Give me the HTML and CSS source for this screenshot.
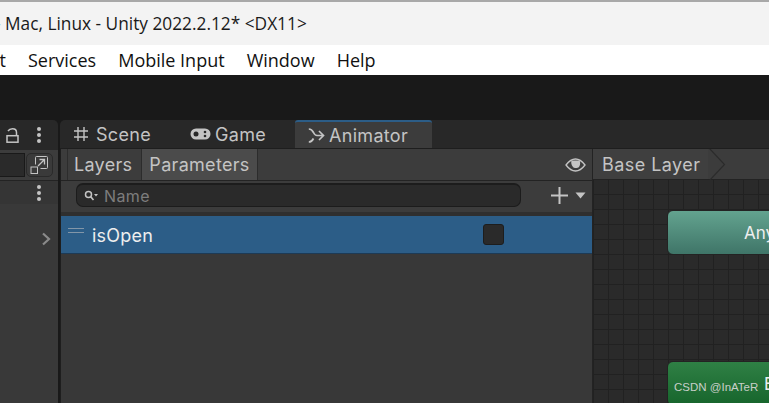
FILE: index.html
```html
<!DOCTYPE html>
<html lang="en">
<head>
<meta charset="utf-8">
<title>Unity Animator</title>
<link rel="stylesheet" href="styles.css">
</head>
<body>
<div class="titlebar"><span class="title">- Mac, Linux - Unity 2022.2.12* &lt;DX11&gt;</span></div>
<nav class="menubar">
  <span class="menu-clip">t</span><span>Services</span><span>Mobile Input</span><span>Window</span><span>Help</span>
</nav>
<div class="toolbar-band"></div>
<main class="workspace">
  <section class="left-panel">
    <div class="left-tabs">
      <svg class="ico-lock" width="13" height="15" viewBox="0 0 13 15"><path d="M2 3C3 1.500 4.500 .8 6.500 .8 9 .8 10.500 2.300 10.500 4.500V8" fill="none" stroke="#c4c4c4" stroke-width="1.500"/><rect x="1" y="7.700" width="11" height="6.500" fill="none" stroke="#c4c4c4" stroke-width="1.500"/></svg>
      <span class="dots"><i></i><i></i><i></i></span>
    </div>
    <div class="left-tools">
      <div class="left-field"></div>
      <div class="left-btn">
        <svg width="20" height="20" viewBox="0 0 20 20"><path d="M5.500 9.500V2.500a1 1 0 0 1 1-1h10a1 1 0 0 1 1 1v10a1 1 0 0 1-1 1h-6" fill="none" stroke="#c4c4c4" stroke-width="1"/><rect x="1" y="12" width="6.500" height="6.500" fill="none" stroke="#c4c4c4"/><path d="M8 11l6-6M9.500 4.500h5v5" fill="none" stroke="#c4c4c4" stroke-width="1.300"/></svg>
      </div>
    </div>
    <div class="left-head"><span class="dots"><i></i><i></i><i></i></span></div>
    <div class="left-body">
      <svg class="chev" width="10" height="14" viewBox="0 0 10 14"><path d="M2 1.500 8 7l-6 5.500" fill="none" stroke="#8a8a8a" stroke-width="2.200"/></svg>
    </div>
  </section>
  <section class="right-panel">
    <div class="tabs">
      <div class="tab tab-scene">
        <svg width="16" height="16" viewBox="0 0 16 16"><path d="M5 1v14M11 1v14M1 5h14M1 11h14" stroke="#c4c4c4" stroke-width="1.400" fill="none"/></svg>
        <span>Scene</span>
      </div>
      <div class="tab tab-game">
        <svg width="21" height="12" viewBox="0 0 21 12"><rect x="0.500" y="0.500" width="20" height="11" rx="5.500" fill="#c4c4c4"/><circle cx="6" cy="6" r="2.500" fill="#282828"/><circle cx="15" cy="4" r="1.300" fill="#282828"/><circle cx="15" cy="8" r="1.300" fill="#282828"/></svg>
        <span>Game</span>
      </div>
      <div class="tab tab-animator">
        <svg width="17" height="15" viewBox="0 0 17 15"><path d="M.8 1c2.500 0 3.700 1.500 4.700 3.500 .7 1.500 1.500 3 3.500 3h6M.8 14c2.500 0 3.700-1.500 4.700-3.500M11 3l4.500 4.500L11 12" fill="none" stroke="#c4c4c4" stroke-width="1.700"/></svg>
        <span>Animator</span>
      </div>
    </div>
    <div class="content">
      <div class="sidebar">
        <div class="side-tabs">
          <span class="side-tab">Layers</span>
          <span class="side-tab is-on">Parameters</span>
          <svg class="eye" width="21" height="14" viewBox="0 0 21 14"><path d="M1 7c3-4 6-6 9.500-6S17 3 20 7c-3 4-6 6-9.500 6S4 11 1 7Z" fill="none" stroke="#c4c4c4" stroke-width="1.300"/><path d="M6.500 2.500h8C15.500 4 15.500 7 14 9c-1.500 1.300-5 1.300-6 0C6 7 6 4 6.500 2.500Z" fill="#c4c4c4"/></svg>
        </div>
        <div class="search-row">
          <div class="search">
            <svg width="14" height="11" viewBox="0 0 14 11"><circle cx="4.500" cy="4.500" r="3" fill="none" stroke="#c4c4c4" stroke-width="1.500"/><path d="M6.500 6.500 9.500 10" stroke="#c4c4c4" stroke-width="1.700"/><path d="M10 4h4l-2 2.500Z" fill="#c4c4c4"/></svg>
            <span>Name</span>
          </div>
          <svg class="plus" width="19" height="19" viewBox="0 0 19 19"><path d="M9.500 1v17M1 9.500h17" stroke="#c4c4c4" stroke-width="2"/></svg>
          <svg class="caret" width="11" height="7" viewBox="0 0 11 7"><path d="M0.500 0.500h10L5.500 6.500Z" fill="#c4c4c4"/></svg>
        </div>
        <div class="param-gap"></div>
        <div class="param">
          <span class="handle"></span>
          <span class="param-name">isOpen</span>
          <span class="check"></span>
        </div>
      </div>
      <div class="graph">
        <div class="crumbs">
          <span class="crumb">Base Layer</span>
          <svg class="crumb-tip" width="18" height="31" viewBox="0 0 18 31"><path d="M1 -1 16.500 15.500 1 32" fill="none" stroke="#2b2b2b" stroke-width="1.200"/></svg>
        </div>
        <div class="canvas">
          <div class="node node-any"><span>Any State</span></div>
          <div class="node node-entry"><span>Entry</span></div>
          <span class="mark">CSDN @InATeR</span>
        </div>
      </div>
    </div>
  </section>
</main>
</body>
</html>
```

FILE: styles.css
```css
* { box-sizing: border-box; }
html, body { margin: 0; height: 403px; overflow: hidden; }
body { width: 769px; background: #191919; font-family: Inter, "Noto Sans", sans-serif; display: flex; flex-direction: column; }

.titlebar { height: 45px; flex: none; background: #f3f3f3; border-top: 2px solid #a8a8a8; display: flex; align-items: center; overflow: hidden; font-family: "Open Sans", sans-serif; color: #1a1a1a; }
.title { font-size: 17.300px; margin-left: -5px; white-space: nowrap; }

.menubar { height: 30px; flex: none; background: #fff; display: flex; align-items: center; gap: 22px; overflow: hidden; font-family: "Open Sans", sans-serif; font-size: 18px; color: #111; }
.menu-clip { width: 6px; overflow: hidden; direction: rtl; }

.toolbar-band { height: 45px; flex: none; background: #191919; }

.workspace { flex: 1; display: flex; gap: 2px; min-height: 0; }

.dots { display: flex; flex-direction: column; gap: 2px; }
.dots i { width: 4px; height: 4px; border-radius: 50%; background: #c4c4c4; display: block; }

.left-panel { width: 58px; flex: none; display: flex; flex-direction: column; border-radius: 0 5px 0 0; overflow: hidden; }
.left-tabs { height: 30px; background: #282828; display: flex; align-items: center; justify-content: flex-end; gap: 18px; padding-right: 17px; }
.left-tools { height: 31px; background: #3c3c3c; border-bottom: 1px solid #232323; display: flex; align-items: center; }
.left-field { width: 25px; height: 24px; background: #2a2a2a; border: 1px solid #191919; border-left: 0; }
.left-btn { width: 27px; height: 24px; margin-left: 1px; background: #3a3a3a; border: 1px solid #2a2a2a; border-radius: 5px; display: flex; align-items: center; justify-content: center; }
.left-head { height: 23px; background: #353535; display: flex; align-items: center; justify-content: flex-end; padding-right: 17px; }
.left-body { flex: 1; background: #393939; padding: 28px 7px 0 0; display: flex; justify-content: flex-end; align-items: flex-start; }

.right-panel { flex: 1; min-width: 0; display: flex; flex-direction: column; }
.tabs { height: 29px; flex: none; background: #282828; border-bottom: 1px solid #1e1e1e; border-radius: 5px 0 0 0; display: flex; align-items: stretch; color: #c4c4c4; font-size: 18px; letter-spacing: .3px; }
.tab { display: flex; align-items: center; gap: 7px; }
.tab-scene { width: 127px; padding-left: 13px; }
.tab-game { width: 108px; padding-left: 3px; gap: 4px; }
.tab-animator { width: 137px; padding-left: 13px; gap: 4px; background: #3c3c3c; border-top: 2px solid #2c5d87; border-radius: 3px 3px 0 0; }

.content { flex: 1; display: flex; min-height: 0; }
.sidebar { width: 533px; flex: none; background: #383838; border-left: 1px solid #1e1e1e; border-right: 1px solid #232323; display: flex; flex-direction: column; }
.side-tabs { height: 32px; flex: none; background: #3c3c3c; border-bottom: 1px solid #232323; display: flex; align-items: stretch; padding: 0 6px; color: #c4c4c4; font-size: 18px; letter-spacing: .3px; }
.side-tab { display: flex; align-items: center; padding: 0 6px; border-left: 1px solid #2c2c2c; margin-right: 3px; }
.side-tab.is-on { background: #4b4b4b; margin-right: 0; padding: 0 7px; border-right: 1px solid #2c2c2c; }
.eye { margin: auto 0 auto auto; }
.search-row { height: 31px; flex: none; background: #3c3c3c; display: flex; align-items: center; padding: 0 0 3px 15px; }
.search { width: 445px; height: 24px; align-self: flex-start; margin-top: 2px; background: #2a2a2a; border: 1px solid #1c1c1c; border-top-width: 2px; border-radius: 7px; display: flex; align-items: center; gap: 6px; padding-left: 7px; color: #7d7d7d; font-size: 16px; letter-spacing: .4px; }
.plus { margin-left: 29px; }
.caret { margin-left: 6px; }
.param-gap { height: 4px; flex: none; background: #2f2f2f; }
.param { height: 38px; flex: none; background: #2c5d87; border-bottom: 1px solid #1d3a55; display: flex; align-items: center; color: #eee; font-size: 18px; letter-spacing: .2px; }
.handle { width: 16px; height: 5px; margin: -8px 0 0 7px; border-top: 1px solid #8296a8; border-bottom: 1px solid #8296a8; }
.param-name { margin: 1px 0 0 8px; }
.check { width: 21px; height: 21px; margin-left: auto; margin-right: 88px; background: #2a2a2a; border: 1px solid #1d1d1d; border-radius: 3px; }

.graph { flex: 1; min-width: 0; display: flex; flex-direction: column; }
.crumbs { height: 31px; flex: none; background: #3c3c3c; border-bottom: 1px solid #232323; display: flex; }
.crumb { width: 115px; background: #3f3f3f; display: flex; align-items: center; padding: 1px 0 0 9px; color: #c4c4c4; font-size: 18px; letter-spacing: .45px; }
.crumb-tip { flex: none; }
.canvas { flex: 1; position: relative; overflow: hidden; background-color: #2a2a2a; background-image: linear-gradient(#212121 1px, transparent 1px), linear-gradient(90deg, #212121 1px, transparent 1px); background-size: 15px 15px; background-position: 0 14px; }
.node { position: absolute; left: 74px; width: 200px; height: 45px; border-radius: 6px; color: #eee; font-size: 17px; display: flex; align-items: center; white-space: nowrap; border: 1px solid #232323; }
.node-any { top: 30px; padding-left: 76px; background: linear-gradient(#63a38f, #3f7568); }
.node-entry { top: 181px; padding: 0 0 0 96px; background: linear-gradient(#2f8045, #17652c); }
.mark { position: absolute; left: 81px; top: 201px; font-size: 11.500px; color: #c8cfc9; font-family: "Liberation Sans", sans-serif; white-space: nowrap; }
```
